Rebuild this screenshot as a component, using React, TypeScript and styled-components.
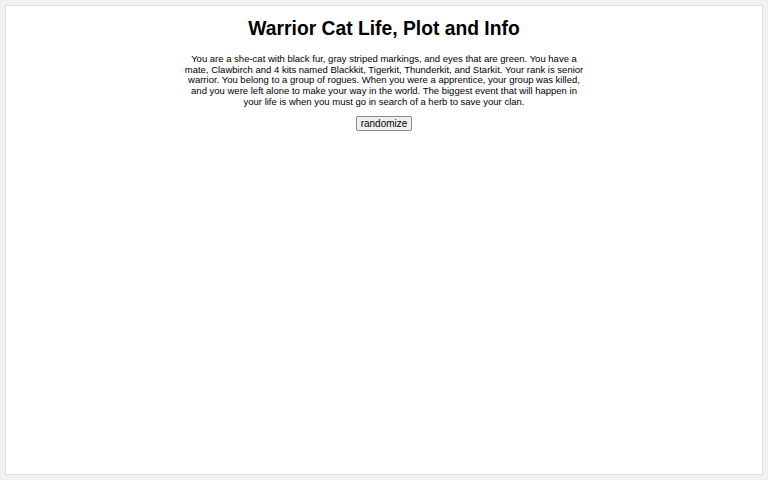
import React from "react";
import styled, { createGlobalStyle } from "styled-components";

const GlobalStyle = createGlobalStyle`
  html, body {
    margin: 0;
    padding: 0;
    background: #f1f1f1;
    font-family: "Liberation Sans", Arial, sans-serif;
  }
`;

const Page = styled.div`
  box-sizing: border-box;
  height: 480px;
  padding: 5px;
`;

const Card = styled.main`
  box-sizing: border-box;
  height: 100%;
  background: #ffffff;
  border: 1px solid #dcdcdc;
  display: flex;
  flex-direction: column;
  align-items: center;
  padding-top: 11px;
`;

const Title = styled.h1`
  margin: 0;
  font-size: 19.3px;
  font-weight: 700;
  color: #000;
  line-height: 24px;
`;

const Story = styled.p`
  margin: 13px 0 0;
  width: 406px;
  font-size: 9.5px;
  line-height: 10.7px;
  text-align: center;
  color: #000;
`;

const Button = styled.button`
  margin-top: 8px;
  font-family: "Liberation Sans", Arial, sans-serif;
  font-size: 10px;
  padding: 1px 4px;
  background: #f0f0f0;
  border: 1px solid #8a8a8a;
  border-radius: 2px;
  color: #000;
`;

const story =
  "You are a she-cat with black fur, gray striped markings, and eyes that are green. You have a mate, Clawbirch and 4 kits named Blackkit, Tigerkit, Thunderkit, and Starkit. Your rank is senior warrior. You belong to a group of rogues. When you were a apprentice, your group was killed, and you were left alone to make your way in the world. The biggest event that will happen in your life is when you must go in search of a herb to save your clan.";

export default function App() {
  return (
    <>
      <GlobalStyle />
      <Page>
        <Card>
          <Title>Warrior Cat Life, Plot and Info</Title>
          <Story>{story}</Story>
          <Button>randomize</Button>
        </Card>
      </Page>
    </>
  );
}
